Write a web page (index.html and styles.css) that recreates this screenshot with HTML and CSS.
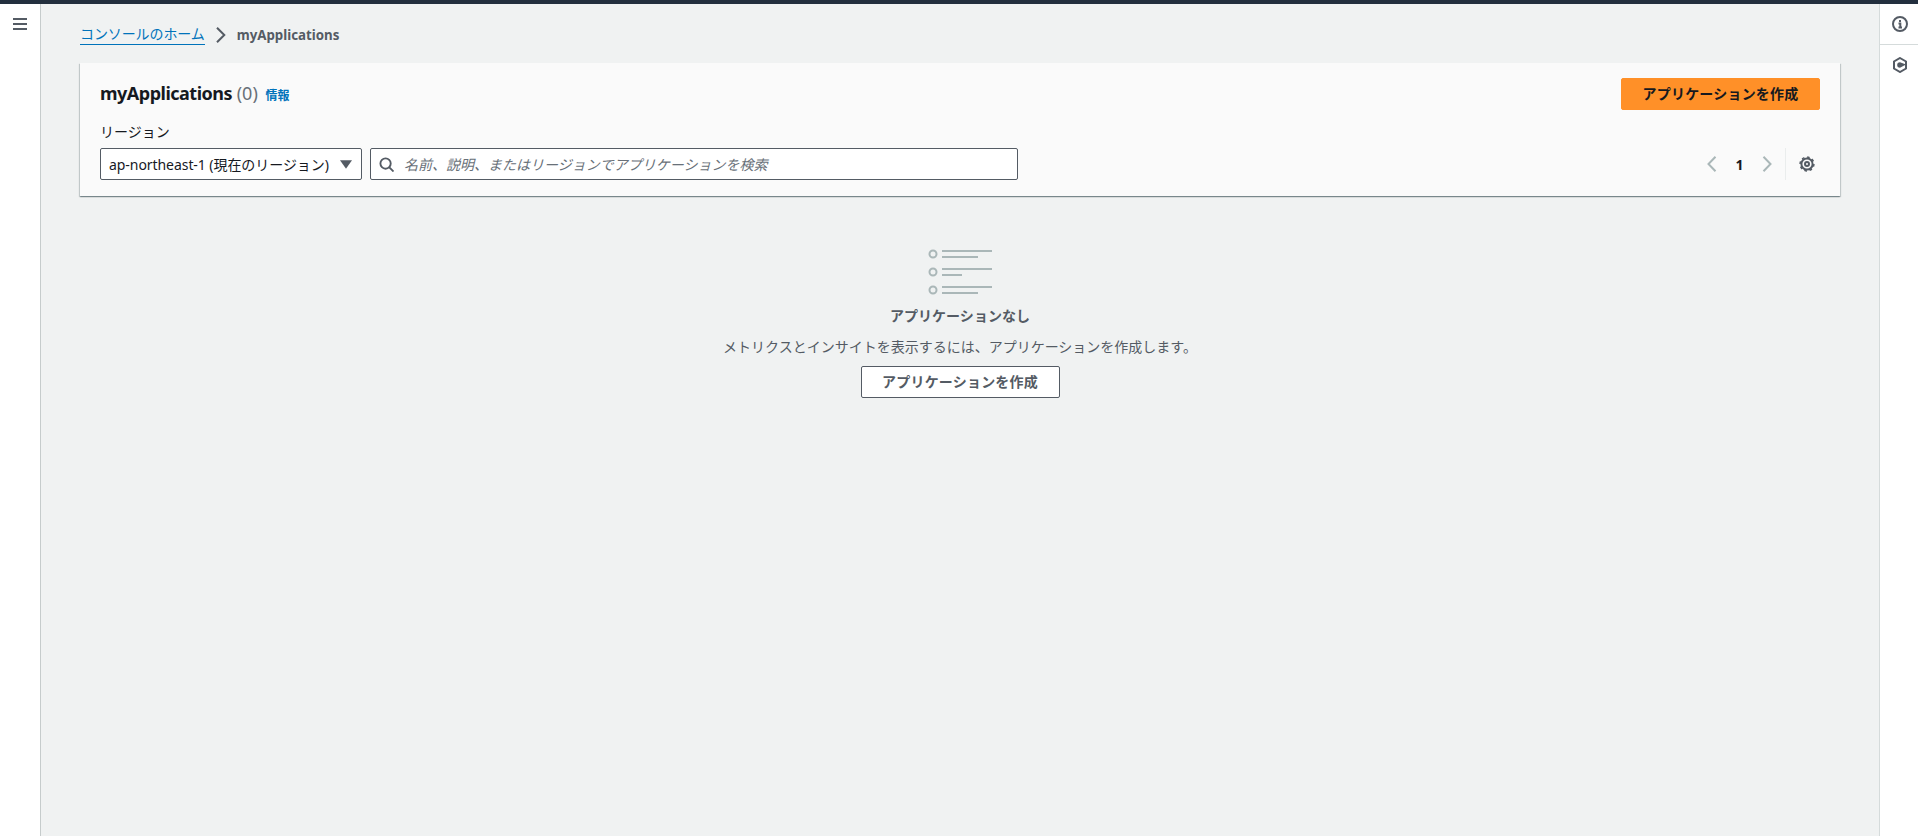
FILE: index.html
```html
<!DOCTYPE html>
<html lang="ja">
<head>
<meta charset="utf-8">
<title>myApplications</title>
<link rel="stylesheet" href="styles.css">
</head>
<body>
<div class="topbar"></div>
<div class="shell">
  <nav class="leftrail">
    <svg class="menu" viewBox="0 0 14 12"><path d="M0 1h14M0 6h14M0 11h14"/></svg>
  </nav>
  <main class="content">
    <div class="crumbs">
      <a class="crumb-link">コンソールのホーム</a>
      <svg class="crumb-sep" viewBox="0 0 12 16"><path d="M2 .7L9.300 8 2 15.300"/></svg>
      <span class="crumb-current">myApplications</span>
    </div>
    <section class="card">
      <div class="card-head">
        <h1 class="title"><span class="title-text">myApplications</span> <span class="count">(0)</span> <a class="info">情報</a></h1>
        <button class="btn primary">アプリケーションを作成</button>
      </div>
      <div class="field-label">リージョン</div>
      <div class="filters">
        <div class="select"><span>ap-northeast-1 (現在のリージョン)</span><svg class="caret" viewBox="0 0 14 10"><path d="M0 0h14L7 10z"/></svg></div>
        <div class="search">
          <svg class="icon search-icon" viewBox="0 0 16 16"><circle cx="7" cy="7" r="5.500"/><path d="M11 11l4.500 4.500"/></svg>
          <span class="placeholder">名前、説明、またはリージョンでアプリケーションを検索</span>
        </div>
        <div class="pager">
          <svg class="pager-arrow" viewBox="0 0 12 16"><path d="M9.500 .8L2.500 8l7 7.200"/></svg>
          <span class="page">1</span>
          <svg class="pager-arrow" viewBox="0 0 12 16"><path d="M2.500 .8L9.500 8l-7 7.200"/></svg>
          <span class="pager-div"></span>
          <svg class="icon gear" viewBox="0 0 16 16"><circle cx="8" cy="8" r="5.600"/><circle class="gear-teeth" cx="8" cy="8" r="6.900" pathLength="48"/><circle cx="8" cy="8" r="2"/></svg>
        </div>
      </div>
    </section>
    <section class="empty">
      <svg class="empty-art" viewBox="0 0 64 48">
        <g class="art-dots"><circle cx="5" cy="6" r="3.500"/><circle cx="5" cy="24" r="3.500"/><circle cx="5" cy="42" r="3.500"/></g>
        <path class="art-lines" d="M14 3h50M14 9h36M14 21h50M14 27h20M14 39h50M14 45h36"/>
      </svg>
      <div class="empty-title">アプリケーションなし</div>
      <p class="empty-text">メトリクスとインサイトを表示するには、アプリケーションを作成します。</p>
      <button class="btn normal">アプリケーションを作成</button>
    </section>
  </main>
  <aside class="rightrail">
    <div class="rail-top">
      <svg class="icon" viewBox="0 0 16 16"><circle cx="8" cy="8" r="7"/><path d="M6.500 7.500H8.300V11.500M6.500 11.500h3.500M8 4v2"/></svg>
    </div>
    <div class="rail-item">
      <svg class="icon" viewBox="0 0 16 16"><path d="M8 1l6 3.500v7L8 15l-6-3.500v-7z"/><path class="fill" d="M8 5.200l6 2.300-6 3.300A2.800 2.800 0 0 1 8 5.200z"/></svg>
    </div>
  </aside>
</div>
</body>
</html>
```
FILE: styles.css
```css
* { box-sizing: border-box; }
html, body { margin: 0; height: 100%; }
body {
  font-family: "Noto Sans", "Noto Sans CJK JP", sans-serif;
  font-size: 14px;
  color: #16191f;
  background: #f2f3f3;
  overflow: hidden;
  display: flex;
  flex-direction: column;
}
.topbar { height: 4px; background: #232f3e; flex: none; }
.shell { flex: 1; display: flex; min-height: 0; }
.leftrail {
  width: 41px;
  flex: none;
  background: #fff;
  border-right: 1px solid #c6cccc;
  padding: 14px 0 0 13px;
}
.menu { width: 14px; height: 12px; display: block; fill: none; stroke: #545b64; stroke-width: 2; }
.rightrail {
  width: 39px;
  flex: none;
  background: #fff;
  border-left: 1px solid #d5dbdb;
}
.rail-top { height: 41px; padding: 12px 0 0 12px; border-bottom: 1px solid #d5dbdb; }
.rail-item { padding: 12px 0 0 12px; }
.icon { width: 16px; height: 16px; display: block; fill: none; stroke: #545b64; stroke-width: 2; }
.icon .fill { fill: #545b64; stroke: none; }
.content { flex: 1; min-width: 0; background: #f0f2f2; padding: 0 39px 0 39px; }
.crumbs { height: 59px; padding-top: 21px; display: flex; align-items: flex-start; font-size: 14px; line-height: 20px; }
.crumb-link { color: #0073bb; border-bottom: 1px solid #0073bb; height: 20px; line-height: 18px; letter-spacing: -.1px; }
.crumb-sep { width: 12px; height: 16px; margin: 2px 10px 0 10px; fill: none; stroke: #545b64; stroke-width: 2; }
.crumb-current { color: #545b64; font-weight: 700; font-size: 13.300px; }
.card {
  background: #fafafa;
  height: 133px;
  padding: 15px 20px 0 20px;
  box-shadow: 0 1px 1px 0 rgba(0, 28, 36, .3), 1px 1px 1px 0 rgba(0, 28, 36, .15), -1px 1px 1px 0 rgba(0, 28, 36, .15);
}
.card-head { display: flex; justify-content: space-between; align-items: flex-start; height: 34px; }
.title { margin: -1px 0 0; font-size: 18px; line-height: 32px; font-weight: 700; }
.title-text { letter-spacing: -.5px; }
.count { font-weight: 400; color: #687078; }
.info { font-size: 12px; font-weight: 700; color: #0073bb; margin-left: 3px; }
.btn {
  font-family: inherit;
  font-size: 14px;
  font-weight: 700;
  height: 32px;
  width: 199px;
  border-radius: 2px;
  padding: 0;
  line-height: 1;
  letter-spacing: .2px;
}
.primary { background: #ff9028; border: 1px solid #ff9028; color: #16191f; }
.normal { background: #fff; border: 1px solid #545b64; color: #545b64; }
.field-label { font-size: 14px; line-height: 20px; margin-top: 10px; margin-bottom: 6px; }
.filters { display: flex; align-items: center; height: 32px; }
.select {
  width: 262px;
  height: 32px;
  background: #fff;
  border: 1px solid #545b64;
  border-radius: 2px;
  display: flex;
  align-items: center;
  justify-content: space-between;
  padding: 0 9px 0 8px;
  font-size: 14px;
  white-space: nowrap;
  letter-spacing: -.06px;
}
.caret { width: 12px; height: 9px; fill: #545b64; flex: none; }
.search {
  width: 648px;
  height: 32px;
  margin-left: 8px;
  background: #fff;
  border: 1px solid #545b64;
  border-radius: 2px;
  display: flex;
  align-items: center;
  padding-left: 8px;
}
.search-icon { width: 15px; height: 15px; flex: none; }
.placeholder { margin-left: 10px; font-style: italic; color: #687078; font-size: 14px; }
.pager { margin-left: auto; display: flex; align-items: center; height: 32px; margin-right: 5px; }
.pager-arrow { width: 12px; height: 16px; fill: none; stroke: #aab7b8; stroke-width: 2; }
.page { width: 43px; text-align: center; font-weight: 700; }
.pager-div { width: 1px; height: 32px; background: #eaeded; margin: 0 13px 0 12px; }
.gear { width: 16px; height: 16px; overflow: visible; }
.gear-teeth { stroke-dasharray: 3 3; stroke-width: 1.500; }
.empty { display: flex; flex-direction: column; align-items: center; padding-top: 52px; }
.empty-art { width: 64px; height: 48px; display: block; }
.art-dots { fill: none; stroke: #aab7b8; stroke-width: 2; }
.art-lines { fill: none; stroke: #aab7b8; stroke-width: 2; }
.empty-title { margin-top: 10px; font-weight: 700; color: #545b64; line-height: 20px; letter-spacing: .05px; }
.empty-text { margin: 11px 0 0; color: #545b64; line-height: 20px; }
.empty .btn { margin-top: 9px; }
```
